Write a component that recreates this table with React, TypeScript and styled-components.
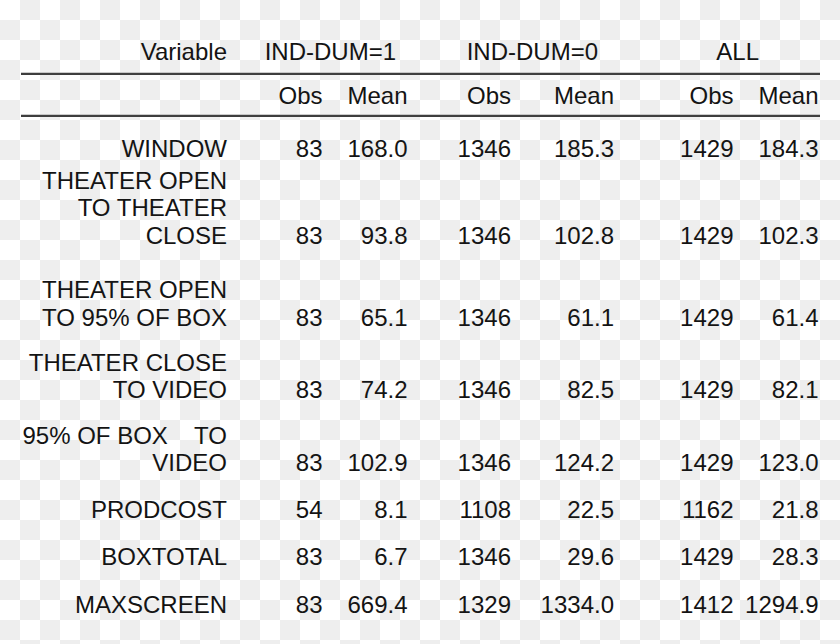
import React from "react";
import styled, { createGlobalStyle } from "styled-components";

const GlobalStyle = createGlobalStyle`
  html, body {
    margin: 0;
    padding: 0;
  }
  body {
    min-height: 644px;
    background-color: #ffffff;
    background-image: conic-gradient(#eeeeee 0 25%, #ffffff 0 50%, #eeeeee 0 75%, #ffffff 0);
    background-size: 40px 40px;
    background-position: 0 0;
  }
`;

const COLS = "206px 95.5px 85px 103.5px 103px 119.5px 85px";

const Page = styled.div`
  padding: 37px 0 0 21px;
  width: 799px;
  font-family: "Liberation Sans", Arial, sans-serif;
  font-size: 24px;
  line-height: 27.5px;
  color: #141414;
`;

const Row = styled.div<{ $mt: number }>`
  display: grid;
  grid-template-columns: ${COLS};
  align-items: end;
  margin-top: ${(p) => p.$mt}px;
`;

const Cell = styled.div`
  text-align: right;
  white-space: pre;
`;

const GroupHead = styled.div<{ $pr: number }>`
  grid-column: span 2;
  text-align: right;
  padding-right: ${(p) => p.$pr}px;
  white-space: pre;
`;

const Rule = styled.div<{ $mt: number }>`
  height: 2px;
  width: 799px;
  margin-top: ${(p) => p.$mt}px;
  background: #3e3e3e;
  box-shadow: 0 -0.5px 0 #9a9a9a;
`;

type DataRow = { label: string[]; v: string[]; mt: number };

const rows: DataRow[] = [
  { label: ["WINDOW"], v: ["83", "168.0", "1346", "185.3", "1429", "184.3"], mt: 17.5 },
  {
    label: ["THEATER OPEN", "TO THEATER", "CLOSE"],
    v: ["83", "93.8", "1346", "102.8", "1429", "102.3"],
    mt: 4.5,
  },
  {
    label: ["THEATER OPEN", "TO 95% OF BOX"],
    v: ["83", "65.1", "1346", "61.1", "1429", "61.4"],
    mt: 27.2,
  },
  {
    label: ["THEATER CLOSE", "TO VIDEO"],
    v: ["83", "74.2", "1346", "82.5", "1429", "82.1"],
    mt: 17.8,
  },
  {
    label: ["95% OF BOX    TO", "VIDEO"],
    v: ["83", "102.9", "1346", "124.2", "1429", "123.0"],
    mt: 17.8,
  },
  { label: ["PRODCOST"], v: ["54", "8.1", "1108", "22.5", "1162", "21.8"], mt: 19.3 },
  { label: ["BOXTOTAL"], v: ["83", "6.7", "1346", "29.6", "1429", "28.3"], mt: 19.2 },
  { label: ["MAXSCREEN"], v: ["83", "669.4", "1329", "1334.0", "1412", "1294.9"], mt: 21.2 },
];

export default function App() {
  return (
    <>
      <GlobalStyle />
      <Page>
        <Row $mt={0.5}>
          <Cell>Variable</Cell>
          <GroupHead $pr={11.5}>IND-DUM=1</GroupHead>
          <GroupHead $pr={16}>IND-DUM=0</GroupHead>
          <GroupHead $pr={59.5}>ALL</GroupHead>
        </Row>
        <Rule $mt={8} />
        <Row $mt={6.5}>
          <Cell />
          <Cell>Obs</Cell>
          <Cell>Mean</Cell>
          <Cell>Obs</Cell>
          <Cell>Mean</Cell>
          <Cell>Obs</Cell>
          <Cell>Mean</Cell>
        </Row>
        <Rule $mt={6} />
        {rows.map((r, i) => (
          <Row key={i} $mt={r.mt}>
            <Cell>
              {r.label.map((l, j) => (
                <React.Fragment key={j}>
                  {j > 0 && <br />}
                  {l}
                </React.Fragment>
              ))}
            </Cell>
            {r.v.map((v, j) => (
              <Cell key={j}>{v}</Cell>
            ))}
          </Row>
        ))}
      </Page>
    </>
  );
}
